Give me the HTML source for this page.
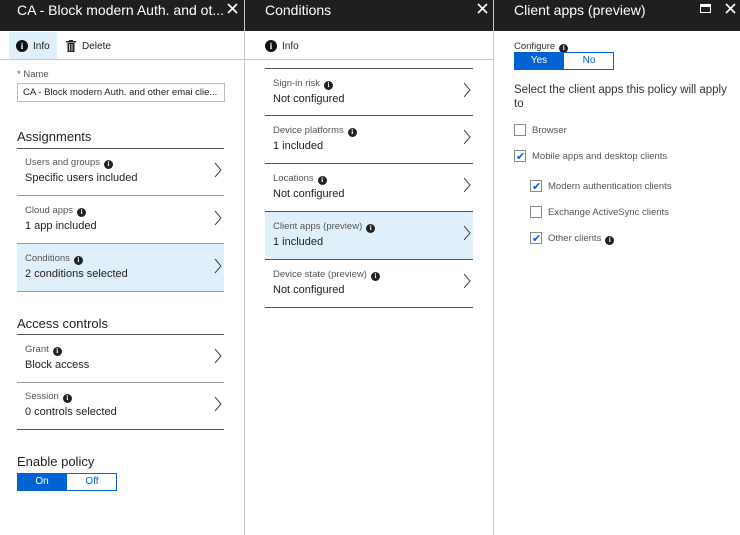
<!DOCTYPE html>
<html><head><meta charset="utf-8"><style>
*{margin:0;padding:0;box-sizing:border-box}
body{width:740px;height:535px;position:relative;background:#fff;font-family:"Liberation Sans",sans-serif;color:#222;overflow:hidden}
.a{position:absolute;white-space:nowrap}
.hdr{position:absolute;top:0;height:31px;background:#1f1f1f}
.t{color:#fff;font-size:14px}
.x{color:#fff;font-size:14px}
.vl{position:absolute;top:0;width:1px;height:535px;background:#c8c8c8}
.hl{position:absolute;height:1px;background:#c8c8c8}
.dl{position:absolute;height:1px;background:#555}
.lbl{font-size:9.5px;color:#555}
.val{font-size:11px;color:#222}
.sec{font-size:13px;color:#222}
.i{display:inline-block;width:9px;height:9px;border-radius:50%;background:#222;color:#fff;font-size:7px;font-weight:bold;text-align:center;line-height:9px;vertical-align:-1px;margin-left:4px;font-family:"Liberation Serif",serif}
.bi{position:absolute;width:12px;height:12px;border-radius:50%;background:#111;color:#fff;font-size:9px;font-weight:bold;text-align:center;line-height:12px;font-family:"Liberation Serif",serif}
.hi{position:absolute;background:#dff0fa}
.cb{position:absolute;width:12px;height:12px;border:1px solid #888;background:#fff}
.ck{position:absolute;left:1px;top:-1px;color:#0063d1;font-size:11px}
</style></head><body>
<div class="hdr" style="left:0;width:740px"></div>
<div class="a t" style="left:17px;top:2px">CA - Block modern Auth. and ot...</div>
<div class="a t" style="left:265px;top:2px">Conditions</div>
<div class="a t" style="left:514px;top:2px">Client apps (preview)</div>
<div class="a" style="left:700px;top:4px;width:11px;height:9px;border:1.5px solid #fff;border-top-width:3px"></div>
<svg class="a" style="left:0;top:0" width="740" height="31"><g stroke="#fff" stroke-width="1.6"><path d="M228 4l9 9M237 4l-9 9"/><path d="M478 4l9 9M487 4l-9 9"/><path d="M726 4l9 9M735 4l-9 9"/></g></svg>
<div class="vl" style="left:244px"></div>
<div class="vl" style="left:493px"></div>

<!-- left -->
<div class="hi" style="left:9px;top:32px;width:48px;height:27px"></div>
<div class="bi" style="left:16px;top:40px">i</div>
<div class="a val" style="left:33px;top:41px;font-size:10px">Info</div>
<svg class="a" style="left:66px;top:40px" width="10" height="12" viewBox="0 0 10 12"><rect x="0" y="1" width="10" height="1.5" fill="#222"/><rect x="3" y="0" width="4" height="1.5" fill="#222"/><rect x="1.5" y="3" width="7" height="9" fill="#222"/><rect x="3.3" y="4" width="0.8" height="7" fill="#fff"/><rect x="5.6" y="4" width="0.8" height="7" fill="#fff"/></svg>
<div class="a val" style="left:82px;top:41px;font-size:10px">Delete</div>
<div class="hl" style="left:0;top:59px;width:244px"></div>
<div class="a lbl" style="left:17px;top:69px">* Name</div>
<div class="a" style="left:17px;top:83px;width:208px;height:19px;border:1px solid #bbb"></div>
<div class="a val" style="left:23px;top:87px;font-size:9.5px">CA - Block modern Auth. and other emai clie...</div>
<div class="a sec" style="left:17px;top:129px">Assignments</div>
<div class="dl" style="left:17px;top:148px;width:207px"></div>

<div class="a lbl" style="left:25px;top:157px">Users and groups<span class="i">i</span></div>
<div class="a val" style="left:25px;top:172px">Specific users included</div>
<div class="hl" style="left:17px;top:195px;width:207px;background:#999"></div>
<div class="a lbl" style="left:25px;top:205px">Cloud apps<span class="i">i</span></div>
<div class="a val" style="left:25px;top:220px">1 app included</div>
<div class="hi" style="left:17px;top:243px;width:207px;height:48px"></div>
<div class="hl" style="left:17px;top:243px;width:207px;background:#999"></div>
<div class="a lbl" style="left:25px;top:253px">Conditions<span class="i">i</span></div>
<div class="a val" style="left:25px;top:268px">2 conditions selected</div>
<div class="hl" style="left:17px;top:291px;width:207px;background:#999"></div>

<div class="a sec" style="left:17px;top:316px">Access controls</div>
<div class="dl" style="left:17px;top:334px;width:207px"></div>
<div class="a lbl" style="left:25px;top:344px">Grant<span class="i">i</span></div>
<div class="a val" style="left:25px;top:359px">Block access</div>
<div class="hl" style="left:17px;top:382px;width:207px;background:#999"></div>
<div class="a lbl" style="left:25px;top:391px">Session<span class="i">i</span></div>
<div class="a val" style="left:25px;top:406px">0 controls selected</div>
<div class="dl" style="left:17px;top:429px;width:207px"></div>
<div class="a sec" style="left:17px;top:454px">Enable policy</div>
<div class="a" style="left:17px;top:473px;width:100px;height:18px;border:1px solid #0063d1"></div>
<div class="a" style="left:17px;top:473px;width:50px;height:18px;background:#0063d1;color:#fff;font-size:10px;text-align:center;line-height:18px">On</div>
<div class="a" style="left:67px;top:473px;width:50px;height:18px;color:#0063d1;font-size:10px;text-align:center;line-height:18px">Off</div>

<!-- middle -->
<div class="bi" style="left:265px;top:40px">i</div>
<div class="a val" style="left:282px;top:41px;font-size:10px">Info</div>
<div class="hl" style="left:245px;top:59px;width:248px"></div>
<div class="hi" style="left:265px;top:211px;width:208px;height:48px"></div>
<div class="dl" style="left:265px;top:68px;width:208px"></div>
<div class="a lbl" style="left:273px;top:78px">Sign-in risk<span class="i">i</span></div>
<div class="a val" style="left:273px;top:93px">Not configured</div>
<div class="dl" style="left:265px;top:115px;width:208px"></div>
<div class="a lbl" style="left:273px;top:125px">Device platforms<span class="i">i</span></div>
<div class="a val" style="left:273px;top:140px">1 included</div>
<div class="dl" style="left:265px;top:163px;width:208px"></div>
<div class="a lbl" style="left:273px;top:173px">Locations<span class="i">i</span></div>
<div class="a val" style="left:273px;top:188px">Not configured</div>
<div class="dl" style="left:265px;top:211px;width:208px"></div>
<div class="a lbl" style="left:273px;top:221px">Client apps (preview)<span class="i">i</span></div>
<div class="a val" style="left:273px;top:236px">1 included</div>
<div class="dl" style="left:265px;top:259px;width:208px"></div>
<div class="a lbl" style="left:273px;top:269px">Device state (preview)<span class="i">i</span></div>
<div class="a val" style="left:273px;top:284px">Not configured</div>
<div class="dl" style="left:265px;top:307px;width:208px"></div>

<svg class="a" style="left:0;top:0" width="740" height="535">
<g fill="none" stroke="#444" stroke-width="1">
<path d="M215 163l6 7-6 7"/><path d="M215 211l6 7-6 7"/><path d="M215 259l6 7-6 7"/>
<path d="M215 349l6 7-6 7"/><path d="M215 397l6 7-6 7"/>
<path d="M464 83l6 7-6 7"/><path d="M464 130l6 7-6 7"/><path d="M464 178l6 7-6 7"/><path d="M464 226l6 7-6 7"/><path d="M464 274l6 7-6 7"/>
</g></svg>

<!-- right -->
<div class="a lbl" style="left:514px;top:41px;color:#333">Configure<span class="i">i</span></div>
<div class="a" style="left:514px;top:52px;width:100px;height:18px;border:1px solid #0063d1"></div>
<div class="a" style="left:514px;top:52px;width:50px;height:18px;background:#0063d1;color:#fff;font-size:10px;text-align:center;line-height:18px">Yes</div>
<div class="a" style="left:564px;top:52px;width:50px;height:18px;color:#0063d1;font-size:10px;text-align:center;line-height:18px">No</div>
<div class="a" style="left:514px;top:83px;font-size:11.5px;color:#333;line-height:14px;white-space:normal;width:215px">Select the client apps this policy will apply to</div>
<div class="cb" style="left:514px;top:124px"></div>
<div class="a lbl" style="left:532px;top:125px">Browser</div>
<div class="cb" style="left:514px;top:150px"><span class="ck">✔</span></div>
<div class="a lbl" style="left:532px;top:151px">Mobile apps and desktop clients</div>
<div class="cb" style="left:530px;top:180px"><span class="ck">✔</span></div>
<div class="a lbl" style="left:548px;top:181px">Modern authentication clients</div>
<div class="cb" style="left:530px;top:206px"></div>
<div class="a lbl" style="left:548px;top:207px">Exchange ActiveSync clients</div>
<div class="cb" style="left:530px;top:232px"><span class="ck">✔</span></div>
<div class="a lbl" style="left:548px;top:233px">Other clients<span class="i">i</span></div>
</body></html>
